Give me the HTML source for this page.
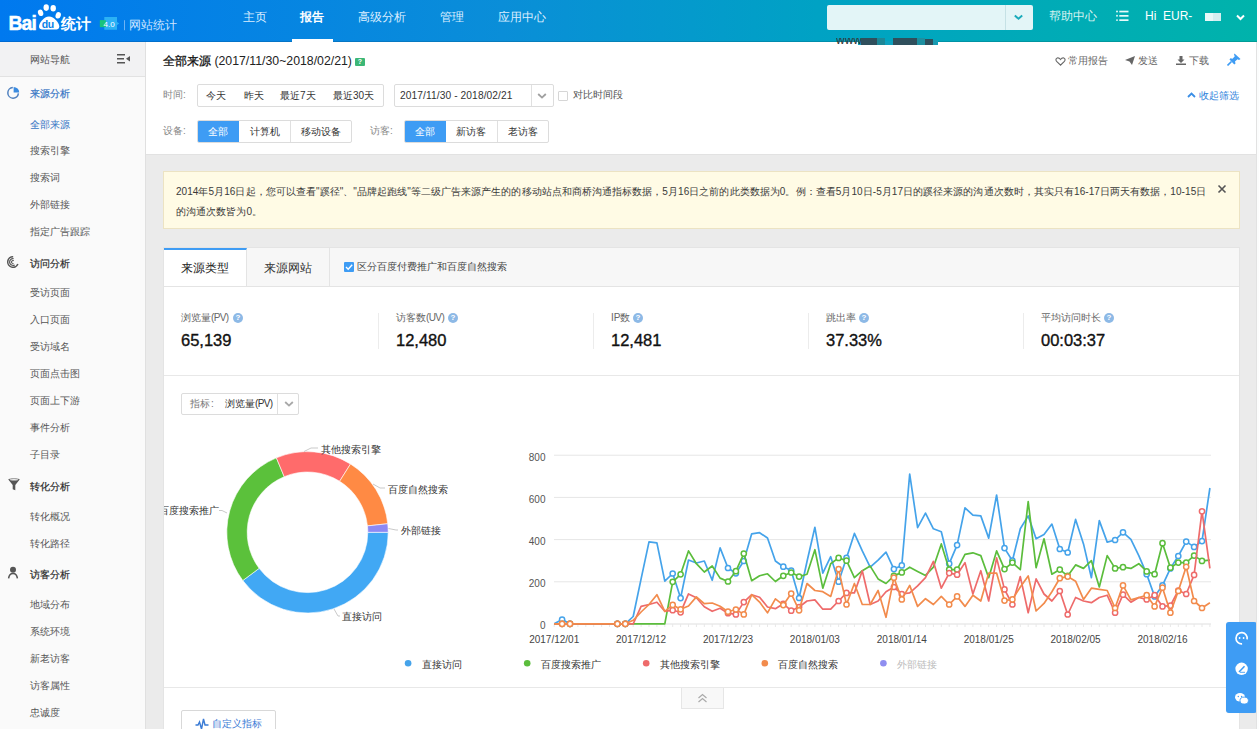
<!DOCTYPE html>
<html><head><meta charset="utf-8">
<style>
*{box-sizing:border-box}
html,body{margin:0;padding:0;width:1259px;height:729px;overflow:hidden;background:#ebebeb;font-family:"Liberation Sans",sans-serif;font-size:10.5px;color:#333}
.a{position:absolute}
.t{position:absolute;white-space:nowrap;line-height:16px;height:16px}
#hdr{position:absolute;left:0;top:0;width:1257px;height:42px;background:linear-gradient(90deg,#0079ef 0%,#0a8ed8 40%,#00a2c4 65%,#00b3ab 100%);box-shadow:inset 0 -1px 0 rgba(0,0,0,0.12)}
.nav{position:absolute;top:9px;line-height:16px;font-size:12.3px;color:#dceeff;white-space:nowrap}
#side{position:absolute;left:0;top:42px;width:146px;height:687px;background:#fafafa;border-right:1px solid #e0e0e0}
#sidehd{position:absolute;left:0;top:0;width:145px;height:35px;background:#f2f2f3;border-bottom:1px solid #e2e2e2}
.si{position:absolute;left:30px;line-height:16px;height:16px;font-size:10px;color:#555;white-space:nowrap}
.sh{position:absolute;left:30px;line-height:16px;height:16px;font-size:10px;color:#2a2a2a;-webkit-text-stroke-width:0.2px;white-space:nowrap}
#filt{position:absolute;left:146px;top:42px;width:1113px;height:113px;background:#fff;border-bottom:1px solid #e2e2e2}
.grp{position:absolute;height:23px;border:1px solid #dcdcdc;border-radius:2px;background:#fff;overflow:hidden}
.btn{position:absolute;top:0;height:21px;line-height:21px;font-size:10.5px;color:#333;text-align:center;white-space:nowrap}
.on{background:#3e9cf4;color:#fff}
.sep{position:absolute;top:0;width:1px;height:21px;background:#e0e0e0}
#notice{position:absolute;left:163px;top:171px;width:1077px;height:58px;background:#fffbe5;border:1px solid #ece3c3}
#panel{position:absolute;left:163px;top:247px;width:1077px;height:500px;background:#fff;border:1px solid #e4e4e4;overflow:hidden}
.lab{position:absolute;white-space:nowrap;line-height:14px;font-size:10px;color:#666}
.val{position:absolute;white-space:nowrap;line-height:20px;font-size:16.5px;color:#111;-webkit-text-stroke:0.35px #111}
.q{position:absolute;width:10px;height:10px;border-radius:5px;background:#8db9e6;color:#fff;font-size:8px;line-height:10px;text-align:center;font-weight:bold}
.vs{position:absolute;width:1px;height:36px;background:#ececec}
.ax{position:absolute;white-space:nowrap;line-height:12px;font-size:10px;color:#555}
.lg{position:absolute;white-space:nowrap;line-height:14px;font-size:10px;color:#333}
.dot{position:absolute;width:7px;height:7px;border-radius:4px}
.pl{position:absolute;white-space:nowrap;line-height:14px;font-size:10px;color:#333}
</style></head><body>
<div id="hdr">
  <!-- logo -->
  <svg class="a" style="left:0;top:0" width="200" height="42" viewBox="0 0 200 42">
    <text x="8.6" y="29.8" font-family="Liberation Sans" font-weight="bold" font-size="19.3" fill="#fff" stroke="#fff" stroke-width="0.5" letter-spacing="-0.9">Bai</text>
    <ellipse cx="40.6" cy="12.8" rx="2.6" ry="3.3" fill="#fff" transform="rotate(-20 40.6 12.8)"/>
    <ellipse cx="46.2" cy="7.6" rx="2.7" ry="3.3" fill="#fff"/>
    <ellipse cx="53.2" cy="8.3" rx="2.7" ry="3.3" fill="#fff"/>
    <ellipse cx="58.2" cy="15.3" rx="2.6" ry="3.3" fill="#fff" transform="rotate(20 58.2 15.3)"/>
    <path d="M49 16.5 C44 16.5 39 23 39 26.5 C39 29.2 41.5 29.6 43.5 29.6 L55 29.6 C57.5 29.6 59.3 29 59.3 26.5 C59.3 23 54 16.5 49 16.5 Z" fill="#fff"/>
    <text x="41.8" y="27.6" font-family="Liberation Sans" font-weight="bold" font-size="10.5" fill="#0a7fe8" letter-spacing="-0.4">du</text>
    <text x="61.3" y="29" font-family="Liberation Sans" font-weight="bold" font-size="15" fill="#fff">统计</text>
    <rect x="99.9" y="20.3" width="6" height="6.8" fill="#19c37d"/>
    <path d="M104.3 17 H117 V22 L119.3 23.5 L117 25 V29.8 H104.3 Z" fill="#2bb2f5"/>
    <rect x="99.9" y="20.3" width="6" height="6.8" fill="#19c37d"/>
    <text x="103.5" y="27.2" font-family="Liberation Sans" font-size="8" fill="#fff">4.0</text>
    <rect x="124" y="20.2" width="1" height="10" fill="#6fb4f4"/>
  </svg>
  <div class="a" style="left:129px;top:17px;line-height:16px;font-size:12px;color:#cfe6ff;white-space:nowrap">网站统计</div>
  <div class="nav" style="left:243px">主页</div>
  <div class="nav" style="left:300px;color:#fff;font-weight:bold">报告</div>
  <div class="a" style="left:292px;top:39px;width:41px;height:3px;background:#fff"></div>
  <div class="nav" style="left:358px">高级分析</div>
  <div class="nav" style="left:440px">管理</div>
  <div class="nav" style="left:498px">应用中心</div>
  <div class="a" style="left:827px;top:5px;width:206px;height:25px;background:#e3f5f7;border-radius:2px"></div>
  <div class="a" style="left:1005px;top:5px;width:1px;height:25px;background:#c5e1e5"></div>
  <svg class="a" style="left:1013px;top:14px" width="11" height="7" viewBox="0 0 11 7"><path d="M1.8 1.5 L5.5 4.8 L9.2 1.5" stroke="#1aabbb" stroke-width="1.9" fill="none"/></svg>
  <div class="nav" style="left:1049px;top:8px;font-size:12px;color:#d6f3f1">帮助中心</div>
  <svg class="a" style="left:1115.5px;top:10px" width="14" height="12" viewBox="0 0 14 12"><g fill="#e8fbfa"><circle cx="1" cy="1.5" r="0.95"/><circle cx="1" cy="5.8" r="0.95"/><circle cx="1" cy="10.1" r="0.95"/><rect x="3.3" y="0.7" width="9.2" height="1.7"/><rect x="3.3" y="5" width="9.2" height="1.7"/><rect x="3.3" y="9.3" width="9.2" height="1.7"/></g></svg>
  <div class="nav" style="left:1145px;top:8px;font-size:12px;color:#fff">Hi&nbsp; EUR-</div>
  <div class="a" style="left:1205px;top:13px;width:16px;height:8px;background:#d5eef0"></div>
  <div class="a" style="left:1205px;top:13px;width:8px;height:8px;background:#e8f8f8"></div>
  <svg class="a" style="left:1236px;top:14px" width="9" height="7" viewBox="0 0 9 7"><path d="M1 1.5 L4.5 5 L8 1.5" stroke="#fff" stroke-width="2" fill="none"/></svg>
</div>
<div class="a" style="left:0;top:42px;width:1259px;height:1px;background:#e8fbff"></div>
<!-- pixelated www -->
<div class="a" style="left:836px;top:38px;width:102px;height:7px;overflow:hidden;z-index:5">
  <div class="a" style="left:22px;top:3px;width:80px;height:4px;background:#0ea1bf"></div>
  <div class="a" style="left:0;top:-4px;font-size:12px;line-height:12px;color:#333">www</div>
  <div class="a" style="left:25px;top:0;width:16px;height:6.6px;background:#2f4f5c"></div>
  <div class="a" style="left:41px;top:0;width:8px;height:6.6px;background:#1d8797"></div>
  <div class="a" style="left:57px;top:0;width:24px;height:6.6px;background:#2f4f5c"></div>
  <div class="a" style="left:81px;top:0;width:8px;height:6.6px;background:#1d8fa0"></div>
  <div class="a" style="left:89px;top:1px;width:8px;height:5.6px;background:#2f4f5c"></div>
  <div class="a" style="left:97px;top:2px;width:4px;height:4.6px;background:#1a9ab0"></div>
</div>

<div id="side">
  <div id="sidehd"></div>
  <div class="si" style="top:10px">网站导航</div>
  <svg class="a" style="left:117px;top:12px" width="13" height="10" viewBox="0 0 13 10"><g fill="#555"><rect x="0" y="0" width="8" height="1.5"/><rect x="0" y="4" width="7" height="1.5"/><rect x="0" y="8" width="8" height="1.5"/><path d="M13 2 L9 4.8 L13 7.5 Z"/></g></svg>
  <svg class="a" style="left:6px;top:43.5px" width="14" height="14" viewBox="0 0 14 14"><path d="M6.8 1.6 A5.3 5.3 0 1 0 12.4 7.4" stroke="#4f80bf" stroke-width="1.5" fill="none"/><path d="M7.6 6.5 V0.9 A5.6 5.6 0 0 1 13.2 6.5 Z" fill="#3b8be0"/></svg>
  <div class="sh" style="top:44px;color:#3574c4">来源分析</div>
  <div class="si" style="top:75px;color:#3574c4">全部来源</div>
  <div class="si" style="top:101px">搜索引擎</div>
  <div class="si" style="top:128px">搜索词</div>
  <div class="si" style="top:155px">外部链接</div>
  <div class="si" style="top:182px">指定广告跟踪</div>
  <svg class="a" style="left:6px;top:213px" width="14" height="14" viewBox="0 0 14 14"><path d="M7.18 1.70 A5.3 5.3 0 1 0 11.91 8.99" stroke="#555" stroke-width="1.5" fill="none"/><path d="M7.59 3.65 A3.4 3.4 0 1 0 8.70 9.94" stroke="#555" stroke-width="1.2" fill="none"/><path d="M7.75 5.70 A1.5 1.5 0 1 0 7.51 8.41" stroke="#555" stroke-width="1.1" fill="none"/></svg>
  <div class="sh" style="top:214px">访问分析</div>
  <div class="si" style="top:243px">受访页面</div>
  <div class="si" style="top:270px">入口页面</div>
  <div class="si" style="top:297px">受访域名</div>
  <div class="si" style="top:324px">页面点击图</div>
  <div class="si" style="top:351px">页面上下游</div>
  <div class="si" style="top:378px">事件分析</div>
  <div class="si" style="top:405px">子目录</div>
  <svg class="a" style="left:7.5px;top:436px" width="12" height="13" viewBox="0 0 12 13"><path d="M0.3 1.6 C0.3 0.2 11.7 0.2 11.7 1.6 L7.3 7 V12.2 L4.7 11.2 V7 Z" fill="#555"/><ellipse cx="6" cy="1.7" rx="4.4" ry="0.8" fill="#eee"/></svg>
  <div class="sh" style="top:437px">转化分析</div>
  <div class="si" style="top:467px">转化概况</div>
  <div class="si" style="top:494px">转化路径</div>
  <svg class="a" style="left:7.3px;top:524px" width="12" height="13" viewBox="0 0 12 13"><circle cx="6" cy="3.8" r="3" fill="#555"/><path d="M1.6 12.4 C2 8.6 4 7.4 6 7.4 C8 7.4 10 8.6 10.4 12.4" stroke="#555" stroke-width="1.5" fill="none"/></svg>
  <div class="sh" style="top:525px">访客分析</div>
  <div class="si" style="top:555px">地域分布</div>
  <div class="si" style="top:582px">系统环境</div>
  <div class="si" style="top:609px">新老访客</div>
  <div class="si" style="top:636px">访客属性</div>
  <div class="si" style="top:663px">忠诚度</div>
</div>

<div id="filt">
  <div class="t" style="left:17px;top:11px;font-size:12.3px;color:#222"><span style="color:#111;-webkit-text-stroke:0.3px #111">全部来源</span> (2017/11/30~2018/02/21)</div>
  <div class="a" style="left:209px;top:16px;width:10px;height:8px;background:#3cb776;border-radius:1px;color:#fff;font-size:7px;line-height:8px;text-align:center;font-weight:bold">?</div>
  <!-- right tools -->
  <svg class="a" style="left:908.5px;top:15px" width="11" height="9" viewBox="0 0 11 9"><path d="M5.5 8.2 L1.6 4.3 C0.6 3.2 0.8 1.4 2.1 1 C3.3 0.6 4.6 1.3 5.5 2.5 C6.4 1.3 7.7 0.6 8.9 1 C10.2 1.4 10.4 3.2 9.4 4.3 Z" stroke="#666" stroke-width="1.1" fill="none"/></svg>
  <div class="t" style="left:922px;top:11px;font-size:10px;color:#666">常用报告</div>
  <svg class="a" style="left:979px;top:14px" width="10" height="9" viewBox="0 0 10 9"><path d="M0 4 L10 0 L7 9 L4.5 5.5 Z" fill="#666"/></svg>
  <div class="t" style="left:992px;top:11px;font-size:10px;color:#666">发送</div>
  <svg class="a" style="left:1030px;top:14px" width="10" height="9" viewBox="0 0 10 9"><path d="M3.5 0 H6.5 V3.5 H8.5 L5 7 L1.5 3.5 H3.5 Z" fill="#666"/><rect x="0" y="7.5" width="10" height="1.5" fill="#666"/></svg>
  <div class="t" style="left:1043px;top:11px;font-size:10px;color:#666">下载</div>
  <svg class="a" style="left:1081px;top:11px" width="14" height="13" viewBox="0 0 14 13"><path d="M7.5 0.5 L13.5 6 L12 7 L10.5 6.2 L8 8.5 L8.5 10.5 L7.3 11.5 L2.5 6.5 L3.5 5.3 L5.5 5.8 L7.8 3.2 L7 1.8 Z" fill="#3e9cf4"/><path d="M4.5 8.5 L0.5 12.5" stroke="#3e9cf4" stroke-width="1.6"/></svg>
  <svg class="a" style="left:1041px;top:50px" width="9" height="6" viewBox="0 0 9 6"><path d="M1 5 L4.5 1.5 L8 5" stroke="#3a8ee6" stroke-width="1.8" fill="none"/></svg>
  <div class="t" style="left:1053px;top:46px;font-size:10px;color:#2f84dc">收起筛选</div>

  <div class="t" style="left:17px;top:45px;color:#888;font-size:10px">时间:</div>
  <div class="grp" style="left:51px;top:42px;width:187px">
    <div class="t" style="left:8px;top:3px;font-size:10px">今天</div>
    <div class="t" style="left:46px;top:3px;font-size:10px">昨天</div>
    <div class="t" style="left:82px;top:3px;font-size:10px">最近7天</div>
    <div class="t" style="left:135px;top:3px;font-size:10px">最近30天</div>
  </div>
  <div class="grp" style="left:248px;top:42px;width:160px">
    <div class="t" style="left:5px;top:3px;font-size:10.2px;letter-spacing:0.1px">2017/11/30 - 2018/02/21</div>
    <div class="sep" style="left:136px"></div>
  </div>
  <svg class="a" style="left:391px;top:51px" width="10" height="6" viewBox="0 0 10 6"><path d="M1.2 1 L5 4.6 L8.8 1" stroke="#a0a0a0" stroke-width="1.8" fill="none"/></svg>
  <div class="a" style="left:412px;top:49px;width:10px;height:10px;border:1px solid #d6d6d6;border-radius:1px;background:#fff"></div>
  <div class="t" style="left:427px;top:45px;color:#555;font-size:10px">对比时间段</div>

  <div class="t" style="left:17px;top:81px;color:#888;font-size:10px">设备:</div>
  <div class="grp" style="left:51px;top:78px;width:155px">
    <div class="a on" style="left:-1px;top:-1px;width:42px;height:23px"></div>
    <div class="t" style="left:10px;top:3px;font-size:10px;color:#fff">全部</div>
    <div class="t" style="left:52px;top:3px;font-size:10px">计算机</div>
    <div class="sep" style="left:92px"></div>
    <div class="t" style="left:103px;top:3px;font-size:10px">移动设备</div>
  </div>
  <div class="t" style="left:224px;top:81px;color:#888;font-size:10px">访客:</div>
  <div class="grp" style="left:258px;top:78px;width:145px">
    <div class="a on" style="left:-1px;top:-1px;width:42px;height:23px"></div>
    <div class="t" style="left:10px;top:3px;font-size:10px;color:#fff">全部</div>
    <div class="t" style="left:51px;top:3px;font-size:10px">新访客</div>
    <div class="sep" style="left:92px"></div>
    <div class="t" style="left:103px;top:3px;font-size:10px">老访客</div>
  </div>
</div>

<div id="notice">
  <div class="a" style="left:12px;top:10px;width:1033px;line-height:20px;font-size:10px;color:#3a3a3a;letter-spacing:0.06px">2014年5月16日起，您可以查看"蹊径"、"品牌起跑线"等二级广告来源产生的的移动站点和商桥沟通指标数据，5月16日之前的此类数据为0。例：查看5月10日-5月17日的蹊径来源的沟通次数时，其实只有16-17日两天有数据，10-15日的沟通次数皆为0。</div>
  <svg class="a" style="left:1053px;top:12px" width="10" height="10" viewBox="0 0 10 10"><path d="M1.5 1.5 L8.5 8.5 M8.5 1.5 L1.5 8.5" stroke="#555" stroke-width="1.6"/></svg>
</div>

<div id="panel">
  <div class="a" style="left:0;top:0;width:1077px;height:39px;background:#f7f7f7;border-bottom:1px solid #e4e4e4"></div>
  <div class="a" style="left:0;top:0;width:83px;height:38px;background:#fff;border-top:2px solid #3e9cf4;border-right:1px solid #e4e4e4"></div>
  <div class="t" style="left:17px;top:12px;font-size:12px;color:#222">来源类型</div>
  <div class="a" style="left:165px;top:0;width:1px;height:39px;background:#e4e4e4"></div>
  <div class="t" style="left:100px;top:12px;font-size:12px;color:#333">来源网站</div>
  <div class="a" style="left:180px;top:14px;width:10px;height:10px;background:#3e9cf4;border-radius:1px"></div>
  <svg class="a" style="left:180px;top:14px" width="10" height="10" viewBox="0 0 10 10"><path d="M2 5 L4.2 7.2 L8.2 2.8" stroke="#fff" stroke-width="1.4" fill="none"/></svg>
  <div class="t" style="left:193px;top:11px;font-size:10px;color:#444">区分百度付费推广和百度自然搜索</div>

  <!-- metrics -->
  <div class="lab" style="left:17px;top:63px">浏览量<span style="letter-spacing:-0.6px">(PV)</span></div><div class="q" style="left:69px;top:65px">?</div>
  <div class="val" style="left:17px;top:82px">65,139</div>
  <div class="vs" style="left:214px;top:65px"></div>
  <div class="lab" style="left:232px;top:63px">访客数<span style="letter-spacing:-0.6px">(UV)</span></div><div class="q" style="left:284px;top:65px">?</div>
  <div class="val" style="left:232px;top:82px">12,480</div>
  <div class="vs" style="left:429px;top:65px"></div>
  <div class="lab" style="left:447px;top:63px">IP数</div><div class="q" style="left:469px;top:65px">?</div>
  <div class="val" style="left:447px;top:82px">12,481</div>
  <div class="vs" style="left:644px;top:65px"></div>
  <div class="lab" style="left:662px;top:63px">跳出率</div><div class="q" style="left:695px;top:65px">?</div>
  <div class="val" style="left:662px;top:82px">37.33%</div>
  <div class="vs" style="left:859px;top:65px"></div>
  <div class="lab" style="left:877px;top:63px">平均访问时长</div><div class="q" style="left:940px;top:65px">?</div>
  <div class="val" style="left:877px;top:82px">00:03:37</div>
  <div class="a" style="left:0;top:127px;width:1077px;height:1px;background:#e8e8e8"></div>

  <svg class="a" style="left:-1px;top:-1px" width="1077" height="500" viewBox="163 247 1077 500">
<!--CHART-->
<rect x="554" y="623.5" width="657" height="1" fill="#e0e0e0"/>
<rect x="554" y="581.3" width="657" height="1" fill="#e6e6e6"/>
<rect x="554" y="539.1" width="657" height="1" fill="#e6e6e6"/>
<rect x="554" y="496.9" width="657" height="1" fill="#e6e6e6"/>
<rect x="554" y="454.7" width="657" height="1" fill="#e6e6e6"/>
<rect x="553.7" y="624" width="1" height="3" fill="#e8e8e8"/>
<rect x="561.6" y="624" width="1" height="3" fill="#e8e8e8"/>
<rect x="569.5" y="624" width="1" height="3" fill="#e8e8e8"/>
<rect x="577.4" y="624" width="1" height="3" fill="#e8e8e8"/>
<rect x="585.3" y="624" width="1" height="3" fill="#e8e8e8"/>
<rect x="593.2" y="624" width="1" height="3" fill="#e8e8e8"/>
<rect x="601.1" y="624" width="1" height="3" fill="#e8e8e8"/>
<rect x="609.0" y="624" width="1" height="3" fill="#e8e8e8"/>
<rect x="616.9" y="624" width="1" height="3" fill="#e8e8e8"/>
<rect x="624.8" y="624" width="1" height="3" fill="#e8e8e8"/>
<rect x="632.7" y="624" width="1" height="3" fill="#e8e8e8"/>
<rect x="640.6" y="624" width="1" height="3" fill="#e8e8e8"/>
<rect x="648.5" y="624" width="1" height="3" fill="#e8e8e8"/>
<rect x="656.4" y="624" width="1" height="3" fill="#e8e8e8"/>
<rect x="664.3" y="624" width="1" height="3" fill="#e8e8e8"/>
<rect x="672.2" y="624" width="1" height="3" fill="#e8e8e8"/>
<rect x="680.1" y="624" width="1" height="3" fill="#e8e8e8"/>
<rect x="688.0" y="624" width="1" height="3" fill="#e8e8e8"/>
<rect x="695.9" y="624" width="1" height="3" fill="#e8e8e8"/>
<rect x="703.8" y="624" width="1" height="3" fill="#e8e8e8"/>
<rect x="711.7" y="624" width="1" height="3" fill="#e8e8e8"/>
<rect x="719.6" y="624" width="1" height="3" fill="#e8e8e8"/>
<rect x="727.5" y="624" width="1" height="3" fill="#e8e8e8"/>
<rect x="735.4" y="624" width="1" height="3" fill="#e8e8e8"/>
<rect x="743.3" y="624" width="1" height="3" fill="#e8e8e8"/>
<rect x="751.2" y="624" width="1" height="3" fill="#e8e8e8"/>
<rect x="759.1" y="624" width="1" height="3" fill="#e8e8e8"/>
<rect x="767.0" y="624" width="1" height="3" fill="#e8e8e8"/>
<rect x="774.9" y="624" width="1" height="3" fill="#e8e8e8"/>
<rect x="782.8" y="624" width="1" height="3" fill="#e8e8e8"/>
<rect x="790.7" y="624" width="1" height="3" fill="#e8e8e8"/>
<rect x="798.6" y="624" width="1" height="3" fill="#e8e8e8"/>
<rect x="806.5" y="624" width="1" height="3" fill="#e8e8e8"/>
<rect x="814.4" y="624" width="1" height="3" fill="#e8e8e8"/>
<rect x="822.3" y="624" width="1" height="3" fill="#e8e8e8"/>
<rect x="830.2" y="624" width="1" height="3" fill="#e8e8e8"/>
<rect x="838.1" y="624" width="1" height="3" fill="#e8e8e8"/>
<rect x="846.0" y="624" width="1" height="3" fill="#e8e8e8"/>
<rect x="853.9" y="624" width="1" height="3" fill="#e8e8e8"/>
<rect x="861.8" y="624" width="1" height="3" fill="#e8e8e8"/>
<rect x="869.7" y="624" width="1" height="3" fill="#e8e8e8"/>
<rect x="877.6" y="624" width="1" height="3" fill="#e8e8e8"/>
<rect x="885.5" y="624" width="1" height="3" fill="#e8e8e8"/>
<rect x="893.4" y="624" width="1" height="3" fill="#e8e8e8"/>
<rect x="901.3" y="624" width="1" height="3" fill="#e8e8e8"/>
<rect x="909.2" y="624" width="1" height="3" fill="#e8e8e8"/>
<rect x="917.1" y="624" width="1" height="3" fill="#e8e8e8"/>
<rect x="925.0" y="624" width="1" height="3" fill="#e8e8e8"/>
<rect x="932.9" y="624" width="1" height="3" fill="#e8e8e8"/>
<rect x="940.8" y="624" width="1" height="3" fill="#e8e8e8"/>
<rect x="948.7" y="624" width="1" height="3" fill="#e8e8e8"/>
<rect x="956.6" y="624" width="1" height="3" fill="#e8e8e8"/>
<rect x="964.5" y="624" width="1" height="3" fill="#e8e8e8"/>
<rect x="972.4" y="624" width="1" height="3" fill="#e8e8e8"/>
<rect x="980.3" y="624" width="1" height="3" fill="#e8e8e8"/>
<rect x="988.2" y="624" width="1" height="3" fill="#e8e8e8"/>
<rect x="996.1" y="624" width="1" height="3" fill="#e8e8e8"/>
<rect x="1004.0" y="624" width="1" height="3" fill="#e8e8e8"/>
<rect x="1011.9" y="624" width="1" height="3" fill="#e8e8e8"/>
<rect x="1019.8" y="624" width="1" height="3" fill="#e8e8e8"/>
<rect x="1027.7" y="624" width="1" height="3" fill="#e8e8e8"/>
<rect x="1035.6" y="624" width="1" height="3" fill="#e8e8e8"/>
<rect x="1043.5" y="624" width="1" height="3" fill="#e8e8e8"/>
<rect x="1051.4" y="624" width="1" height="3" fill="#e8e8e8"/>
<rect x="1059.3" y="624" width="1" height="3" fill="#e8e8e8"/>
<rect x="1067.2" y="624" width="1" height="3" fill="#e8e8e8"/>
<rect x="1075.1" y="624" width="1" height="3" fill="#e8e8e8"/>
<rect x="1083.0" y="624" width="1" height="3" fill="#e8e8e8"/>
<rect x="1090.9" y="624" width="1" height="3" fill="#e8e8e8"/>
<rect x="1098.8" y="624" width="1" height="3" fill="#e8e8e8"/>
<rect x="1106.7" y="624" width="1" height="3" fill="#e8e8e8"/>
<rect x="1114.6" y="624" width="1" height="3" fill="#e8e8e8"/>
<rect x="1122.5" y="624" width="1" height="3" fill="#e8e8e8"/>
<rect x="1130.4" y="624" width="1" height="3" fill="#e8e8e8"/>
<rect x="1138.3" y="624" width="1" height="3" fill="#e8e8e8"/>
<rect x="1146.2" y="624" width="1" height="3" fill="#e8e8e8"/>
<rect x="1154.1" y="624" width="1" height="3" fill="#e8e8e8"/>
<rect x="1162.0" y="624" width="1" height="3" fill="#e8e8e8"/>
<rect x="1169.9" y="624" width="1" height="3" fill="#e8e8e8"/>
<rect x="1177.8" y="624" width="1" height="3" fill="#e8e8e8"/>
<rect x="1185.7" y="624" width="1" height="3" fill="#e8e8e8"/>
<rect x="1193.6" y="624" width="1" height="3" fill="#e8e8e8"/>
<rect x="1201.5" y="624" width="1" height="3" fill="#e8e8e8"/>
<rect x="1209.4" y="624" width="1" height="3" fill="#e8e8e8"/>
<polyline points="554.2,623.8 562.1,619.5 570.0,623.8 577.9,623.8 585.8,623.8 593.7,623.8 601.6,623.8 609.5,623.8 617.4,623.8 625.3,623.8 633.2,616.5 641.1,578.8 649.0,541.9 656.9,542.9 664.8,581.1 672.7,573.5 680.6,598.1 688.5,560.0 696.4,563.0 704.3,561.0 712.2,580.3 720.1,547.9 728.0,568.0 735.9,573.3 743.8,561.0 751.7,533.8 759.6,532.7 767.5,538.0 775.4,561.0 783.3,566.7 791.2,570.5 799.1,598.0 807.0,561.5 814.9,527.3 822.8,573.1 830.7,556.7 838.6,581.7 846.5,557.9 854.4,533.4 862.3,550.9 870.2,567.2 878.1,560.2 886.0,552.1 893.9,569.1 901.8,565.4 909.7,474.0 917.6,527.6 925.5,513.1 933.4,528.8 941.3,531.8 949.2,563.7 957.1,545.1 965.0,507.8 972.9,515.2 980.8,515.9 988.7,538.1 996.6,495.0 1004.5,548.1 1012.4,560.7 1020.3,528.8 1028.2,515.9 1036.1,538.8 1044.0,534.6 1051.9,524.1 1059.8,549.0 1067.7,552.5 1075.6,519.4 1083.5,543.9 1091.4,577.7 1099.3,520.6 1107.2,542.1 1115.1,540.0 1123.0,532.3 1130.9,539.3 1138.8,555.6 1146.7,574.2 1154.6,596.4 1162.5,585.4 1170.4,568.4 1178.3,556.0 1186.2,541.6 1194.1,546.9 1202.0,541.1 1209.9,488.0" fill="none" stroke="#45a3ea" stroke-width="1.7" stroke-linejoin="round"/>
<circle cx="562.1" cy="619.5" r="2.6" fill="#fff" stroke="#45a3ea" stroke-width="1.5"/>
<circle cx="570.0" cy="623.8" r="2.6" fill="#fff" stroke="#45a3ea" stroke-width="1.5"/>
<circle cx="617.4" cy="623.8" r="2.6" fill="#fff" stroke="#45a3ea" stroke-width="1.5"/>
<circle cx="625.3" cy="623.8" r="2.6" fill="#fff" stroke="#45a3ea" stroke-width="1.5"/>
<circle cx="672.7" cy="573.5" r="2.6" fill="#fff" stroke="#45a3ea" stroke-width="1.5"/>
<circle cx="680.6" cy="598.1" r="2.6" fill="#fff" stroke="#45a3ea" stroke-width="1.5"/>
<circle cx="728.0" cy="568.0" r="2.6" fill="#fff" stroke="#45a3ea" stroke-width="1.5"/>
<circle cx="735.9" cy="573.3" r="2.6" fill="#fff" stroke="#45a3ea" stroke-width="1.5"/>
<circle cx="743.8" cy="561.0" r="2.6" fill="#fff" stroke="#45a3ea" stroke-width="1.5"/>
<circle cx="783.3" cy="566.7" r="2.6" fill="#fff" stroke="#45a3ea" stroke-width="1.5"/>
<circle cx="791.2" cy="570.5" r="2.6" fill="#fff" stroke="#45a3ea" stroke-width="1.5"/>
<circle cx="799.1" cy="598.0" r="2.6" fill="#fff" stroke="#45a3ea" stroke-width="1.5"/>
<circle cx="838.6" cy="581.7" r="2.6" fill="#fff" stroke="#45a3ea" stroke-width="1.5"/>
<circle cx="846.5" cy="557.9" r="2.6" fill="#fff" stroke="#45a3ea" stroke-width="1.5"/>
<circle cx="893.9" cy="569.1" r="2.6" fill="#fff" stroke="#45a3ea" stroke-width="1.5"/>
<circle cx="901.8" cy="565.4" r="2.6" fill="#fff" stroke="#45a3ea" stroke-width="1.5"/>
<circle cx="949.2" cy="563.7" r="2.6" fill="#fff" stroke="#45a3ea" stroke-width="1.5"/>
<circle cx="957.1" cy="545.1" r="2.6" fill="#fff" stroke="#45a3ea" stroke-width="1.5"/>
<circle cx="1004.5" cy="548.1" r="2.6" fill="#fff" stroke="#45a3ea" stroke-width="1.5"/>
<circle cx="1012.4" cy="560.7" r="2.6" fill="#fff" stroke="#45a3ea" stroke-width="1.5"/>
<circle cx="1059.8" cy="549.0" r="2.6" fill="#fff" stroke="#45a3ea" stroke-width="1.5"/>
<circle cx="1067.7" cy="552.5" r="2.6" fill="#fff" stroke="#45a3ea" stroke-width="1.5"/>
<circle cx="1115.1" cy="540.0" r="2.6" fill="#fff" stroke="#45a3ea" stroke-width="1.5"/>
<circle cx="1123.0" cy="532.3" r="2.6" fill="#fff" stroke="#45a3ea" stroke-width="1.5"/>
<circle cx="1146.7" cy="574.2" r="2.6" fill="#fff" stroke="#45a3ea" stroke-width="1.5"/>
<circle cx="1154.6" cy="596.4" r="2.6" fill="#fff" stroke="#45a3ea" stroke-width="1.5"/>
<circle cx="1162.5" cy="585.4" r="2.6" fill="#fff" stroke="#45a3ea" stroke-width="1.5"/>
<circle cx="1170.4" cy="568.4" r="2.6" fill="#fff" stroke="#45a3ea" stroke-width="1.5"/>
<circle cx="1178.3" cy="556.0" r="2.6" fill="#fff" stroke="#45a3ea" stroke-width="1.5"/>
<circle cx="1186.2" cy="541.6" r="2.6" fill="#fff" stroke="#45a3ea" stroke-width="1.5"/>
<circle cx="1194.1" cy="546.9" r="2.6" fill="#fff" stroke="#45a3ea" stroke-width="1.5"/>
<circle cx="1202.0" cy="541.1" r="2.6" fill="#fff" stroke="#45a3ea" stroke-width="1.5"/>
<polyline points="554.2,623.8 562.1,623.8 570.0,623.8 577.9,623.8 585.8,623.8 593.7,623.8 601.6,623.8 609.5,623.8 617.4,623.8 625.3,623.8 633.2,623.8 641.1,623.8 649.0,623.8 656.9,623.8 664.8,623.8 672.7,581.8 680.6,574.3 688.5,550.9 696.4,563.7 704.3,572.0 712.2,566.0 720.1,578.1 728.0,581.5 735.9,571.2 743.8,553.6 751.7,580.7 759.6,575.8 767.5,573.8 775.4,581.5 783.3,575.8 791.2,572.5 799.1,576.6 807.0,574.2 814.9,549.7 822.8,588.2 830.7,563.7 838.6,557.9 846.5,560.7 854.4,577.7 862.3,570.7 870.2,566.1 878.1,578.9 886.0,583.5 893.9,575.9 901.8,572.4 909.7,567.2 917.6,571.4 925.5,575.4 933.4,567.2 941.3,543.9 949.2,569.6 957.1,569.6 965.0,554.4 972.9,552.8 980.8,555.6 988.7,577.7 996.6,550.9 1004.5,569.1 1012.4,562.6 1020.3,569.6 1028.2,501.5 1036.1,567.7 1044.0,538.8 1051.9,574.2 1059.8,569.6 1067.7,575.9 1075.6,564.9 1083.5,568.4 1091.4,560.7 1099.3,587.0 1107.2,555.6 1115.1,568.4 1123.0,567.2 1130.9,568.4 1138.8,563.7 1146.7,571.4 1154.6,574.2 1162.5,543.2 1170.4,567.7 1178.3,562.6 1186.2,562.6 1194.1,555.6 1202.0,560.9 1209.9,560.2" fill="none" stroke="#5bbd3c" stroke-width="1.7" stroke-linejoin="round"/>
<circle cx="562.1" cy="623.8" r="2.6" fill="#fff" stroke="#5bbd3c" stroke-width="1.5"/>
<circle cx="570.0" cy="623.8" r="2.6" fill="#fff" stroke="#5bbd3c" stroke-width="1.5"/>
<circle cx="617.4" cy="623.8" r="2.6" fill="#fff" stroke="#5bbd3c" stroke-width="1.5"/>
<circle cx="625.3" cy="623.8" r="2.6" fill="#fff" stroke="#5bbd3c" stroke-width="1.5"/>
<circle cx="672.7" cy="581.8" r="2.6" fill="#fff" stroke="#5bbd3c" stroke-width="1.5"/>
<circle cx="680.6" cy="574.3" r="2.6" fill="#fff" stroke="#5bbd3c" stroke-width="1.5"/>
<circle cx="728.0" cy="581.5" r="2.6" fill="#fff" stroke="#5bbd3c" stroke-width="1.5"/>
<circle cx="735.9" cy="571.2" r="2.6" fill="#fff" stroke="#5bbd3c" stroke-width="1.5"/>
<circle cx="743.8" cy="553.6" r="2.6" fill="#fff" stroke="#5bbd3c" stroke-width="1.5"/>
<circle cx="783.3" cy="575.8" r="2.6" fill="#fff" stroke="#5bbd3c" stroke-width="1.5"/>
<circle cx="791.2" cy="572.5" r="2.6" fill="#fff" stroke="#5bbd3c" stroke-width="1.5"/>
<circle cx="799.1" cy="576.6" r="2.6" fill="#fff" stroke="#5bbd3c" stroke-width="1.5"/>
<circle cx="838.6" cy="557.9" r="2.6" fill="#fff" stroke="#5bbd3c" stroke-width="1.5"/>
<circle cx="846.5" cy="560.7" r="2.6" fill="#fff" stroke="#5bbd3c" stroke-width="1.5"/>
<circle cx="893.9" cy="575.9" r="2.6" fill="#fff" stroke="#5bbd3c" stroke-width="1.5"/>
<circle cx="901.8" cy="572.4" r="2.6" fill="#fff" stroke="#5bbd3c" stroke-width="1.5"/>
<circle cx="949.2" cy="569.6" r="2.6" fill="#fff" stroke="#5bbd3c" stroke-width="1.5"/>
<circle cx="957.1" cy="569.6" r="2.6" fill="#fff" stroke="#5bbd3c" stroke-width="1.5"/>
<circle cx="1004.5" cy="569.1" r="2.6" fill="#fff" stroke="#5bbd3c" stroke-width="1.5"/>
<circle cx="1012.4" cy="562.6" r="2.6" fill="#fff" stroke="#5bbd3c" stroke-width="1.5"/>
<circle cx="1059.8" cy="569.6" r="2.6" fill="#fff" stroke="#5bbd3c" stroke-width="1.5"/>
<circle cx="1067.7" cy="575.9" r="2.6" fill="#fff" stroke="#5bbd3c" stroke-width="1.5"/>
<circle cx="1115.1" cy="568.4" r="2.6" fill="#fff" stroke="#5bbd3c" stroke-width="1.5"/>
<circle cx="1123.0" cy="567.2" r="2.6" fill="#fff" stroke="#5bbd3c" stroke-width="1.5"/>
<circle cx="1146.7" cy="571.4" r="2.6" fill="#fff" stroke="#5bbd3c" stroke-width="1.5"/>
<circle cx="1154.6" cy="574.2" r="2.6" fill="#fff" stroke="#5bbd3c" stroke-width="1.5"/>
<circle cx="1162.5" cy="543.2" r="2.6" fill="#fff" stroke="#5bbd3c" stroke-width="1.5"/>
<circle cx="1170.4" cy="567.7" r="2.6" fill="#fff" stroke="#5bbd3c" stroke-width="1.5"/>
<circle cx="1178.3" cy="562.6" r="2.6" fill="#fff" stroke="#5bbd3c" stroke-width="1.5"/>
<circle cx="1186.2" cy="562.6" r="2.6" fill="#fff" stroke="#5bbd3c" stroke-width="1.5"/>
<circle cx="1194.1" cy="555.6" r="2.6" fill="#fff" stroke="#5bbd3c" stroke-width="1.5"/>
<circle cx="1202.0" cy="560.9" r="2.6" fill="#fff" stroke="#5bbd3c" stroke-width="1.5"/>
<polyline points="554.2,623.8 562.1,623.8 570.0,623.8 577.9,623.8 585.8,623.8 593.7,623.8 601.6,623.8 609.5,623.8 617.4,623.8 625.3,623.8 633.2,623.8 641.1,606.3 649.0,604.5 656.9,602.2 664.8,611.3 672.7,610.2 680.6,612.3 688.5,593.9 696.4,597.7 704.3,606.7 712.2,611.3 720.1,608.2 728.0,613.2 735.9,614.4 743.8,602.1 751.7,594.7 759.6,597.2 767.5,607.0 775.4,608.7 783.3,603.8 791.2,610.7 799.1,607.0 807.0,601.0 814.9,599.9 822.8,609.2 830.7,609.2 838.6,601.0 846.5,592.9 854.4,592.9 862.3,570.7 870.2,604.5 878.1,601.0 886.0,591.7 893.9,587.0 901.8,594.0 909.7,592.9 917.6,585.9 925.5,577.7 933.4,561.4 941.3,588.2 949.2,573.1 957.1,574.7 965.0,562.6 972.9,594.0 980.8,570.7 988.7,601.0 996.6,557.9 1004.5,589.4 1012.4,604.5 1020.3,576.6 1028.2,612.7 1036.1,578.9 1044.0,594.0 1051.9,601.0 1059.8,591.0 1067.7,614.5 1075.6,597.5 1083.5,601.0 1091.4,602.7 1099.3,597.5 1107.2,595.2 1115.1,612.7 1123.0,594.7 1130.9,602.2 1138.8,597.5 1146.7,599.4 1154.6,595.2 1162.5,606.4 1170.4,605.7 1178.3,590.5 1186.2,594.0 1194.1,574.9 1202.0,511.3 1209.9,568.4" fill="none" stroke="#ee6b6b" stroke-width="1.7" stroke-linejoin="round"/>
<circle cx="562.1" cy="623.8" r="2.6" fill="#fff" stroke="#ee6b6b" stroke-width="1.5"/>
<circle cx="570.0" cy="623.8" r="2.6" fill="#fff" stroke="#ee6b6b" stroke-width="1.5"/>
<circle cx="617.4" cy="623.8" r="2.6" fill="#fff" stroke="#ee6b6b" stroke-width="1.5"/>
<circle cx="625.3" cy="623.8" r="2.6" fill="#fff" stroke="#ee6b6b" stroke-width="1.5"/>
<circle cx="672.7" cy="610.2" r="2.6" fill="#fff" stroke="#ee6b6b" stroke-width="1.5"/>
<circle cx="680.6" cy="612.3" r="2.6" fill="#fff" stroke="#ee6b6b" stroke-width="1.5"/>
<circle cx="728.0" cy="613.2" r="2.6" fill="#fff" stroke="#ee6b6b" stroke-width="1.5"/>
<circle cx="735.9" cy="614.4" r="2.6" fill="#fff" stroke="#ee6b6b" stroke-width="1.5"/>
<circle cx="743.8" cy="602.1" r="2.6" fill="#fff" stroke="#ee6b6b" stroke-width="1.5"/>
<circle cx="783.3" cy="603.8" r="2.6" fill="#fff" stroke="#ee6b6b" stroke-width="1.5"/>
<circle cx="791.2" cy="610.7" r="2.6" fill="#fff" stroke="#ee6b6b" stroke-width="1.5"/>
<circle cx="799.1" cy="607.0" r="2.6" fill="#fff" stroke="#ee6b6b" stroke-width="1.5"/>
<circle cx="838.6" cy="601.0" r="2.6" fill="#fff" stroke="#ee6b6b" stroke-width="1.5"/>
<circle cx="846.5" cy="592.9" r="2.6" fill="#fff" stroke="#ee6b6b" stroke-width="1.5"/>
<circle cx="893.9" cy="587.0" r="2.6" fill="#fff" stroke="#ee6b6b" stroke-width="1.5"/>
<circle cx="901.8" cy="594.0" r="2.6" fill="#fff" stroke="#ee6b6b" stroke-width="1.5"/>
<circle cx="949.2" cy="573.1" r="2.6" fill="#fff" stroke="#ee6b6b" stroke-width="1.5"/>
<circle cx="957.1" cy="574.7" r="2.6" fill="#fff" stroke="#ee6b6b" stroke-width="1.5"/>
<circle cx="1004.5" cy="589.4" r="2.6" fill="#fff" stroke="#ee6b6b" stroke-width="1.5"/>
<circle cx="1012.4" cy="604.5" r="2.6" fill="#fff" stroke="#ee6b6b" stroke-width="1.5"/>
<circle cx="1059.8" cy="591.0" r="2.6" fill="#fff" stroke="#ee6b6b" stroke-width="1.5"/>
<circle cx="1067.7" cy="614.5" r="2.6" fill="#fff" stroke="#ee6b6b" stroke-width="1.5"/>
<circle cx="1115.1" cy="612.7" r="2.6" fill="#fff" stroke="#ee6b6b" stroke-width="1.5"/>
<circle cx="1123.0" cy="594.7" r="2.6" fill="#fff" stroke="#ee6b6b" stroke-width="1.5"/>
<circle cx="1146.7" cy="599.4" r="2.6" fill="#fff" stroke="#ee6b6b" stroke-width="1.5"/>
<circle cx="1154.6" cy="595.2" r="2.6" fill="#fff" stroke="#ee6b6b" stroke-width="1.5"/>
<circle cx="1162.5" cy="606.4" r="2.6" fill="#fff" stroke="#ee6b6b" stroke-width="1.5"/>
<circle cx="1170.4" cy="605.7" r="2.6" fill="#fff" stroke="#ee6b6b" stroke-width="1.5"/>
<circle cx="1178.3" cy="590.5" r="2.6" fill="#fff" stroke="#ee6b6b" stroke-width="1.5"/>
<circle cx="1186.2" cy="594.0" r="2.6" fill="#fff" stroke="#ee6b6b" stroke-width="1.5"/>
<circle cx="1194.1" cy="574.9" r="2.6" fill="#fff" stroke="#ee6b6b" stroke-width="1.5"/>
<circle cx="1202.0" cy="511.3" r="2.6" fill="#fff" stroke="#ee6b6b" stroke-width="1.5"/>
<polyline points="554.2,623.8 562.1,623.8 570.0,623.8 577.9,623.8 585.8,623.8 593.7,623.8 601.6,623.8 609.5,623.8 617.4,623.8 625.3,623.8 633.2,620.3 641.1,612.0 649.0,604.5 656.9,594.7 664.8,611.3 672.7,604.9 680.6,609.3 688.5,606.0 696.4,596.9 704.3,603.7 712.2,603.0 720.1,606.3 728.0,611.7 735.9,609.5 743.8,614.4 751.7,594.7 759.6,602.1 767.5,612.8 775.4,598.8 783.3,605.1 791.2,593.6 799.1,610.3 807.0,583.5 814.9,590.5 822.8,591.7 830.7,596.4 838.6,569.1 846.5,604.5 854.4,583.5 862.3,604.5 870.2,604.5 878.1,590.5 886.0,617.3 893.9,577.7 901.8,599.4 909.7,585.4 917.6,606.4 925.5,598.7 933.4,604.5 941.3,596.4 949.2,604.5 957.1,596.4 965.0,606.4 972.9,595.2 980.8,601.0 988.7,573.1 996.6,573.1 1004.5,600.6 1012.4,599.4 1020.3,587.0 1028.2,575.9 1036.1,611.0 1044.0,603.4 1051.9,591.7 1059.8,578.2 1067.7,576.6 1075.6,581.2 1083.5,599.4 1091.4,588.2 1099.3,589.4 1107.2,590.5 1115.1,608.0 1123.0,585.4 1130.9,599.9 1138.8,597.5 1146.7,595.2 1154.6,606.4 1162.5,587.7 1170.4,612.7 1178.3,591.0 1186.2,566.8 1194.1,601.0 1202.0,608.0 1209.9,602.7" fill="none" stroke="#f28b4c" stroke-width="1.7" stroke-linejoin="round"/>
<circle cx="562.1" cy="623.8" r="2.6" fill="#fff" stroke="#f28b4c" stroke-width="1.5"/>
<circle cx="570.0" cy="623.8" r="2.6" fill="#fff" stroke="#f28b4c" stroke-width="1.5"/>
<circle cx="617.4" cy="623.8" r="2.6" fill="#fff" stroke="#f28b4c" stroke-width="1.5"/>
<circle cx="625.3" cy="623.8" r="2.6" fill="#fff" stroke="#f28b4c" stroke-width="1.5"/>
<circle cx="672.7" cy="604.9" r="2.6" fill="#fff" stroke="#f28b4c" stroke-width="1.5"/>
<circle cx="680.6" cy="609.3" r="2.6" fill="#fff" stroke="#f28b4c" stroke-width="1.5"/>
<circle cx="728.0" cy="611.7" r="2.6" fill="#fff" stroke="#f28b4c" stroke-width="1.5"/>
<circle cx="735.9" cy="609.5" r="2.6" fill="#fff" stroke="#f28b4c" stroke-width="1.5"/>
<circle cx="743.8" cy="614.4" r="2.6" fill="#fff" stroke="#f28b4c" stroke-width="1.5"/>
<circle cx="783.3" cy="605.1" r="2.6" fill="#fff" stroke="#f28b4c" stroke-width="1.5"/>
<circle cx="791.2" cy="593.6" r="2.6" fill="#fff" stroke="#f28b4c" stroke-width="1.5"/>
<circle cx="799.1" cy="610.3" r="2.6" fill="#fff" stroke="#f28b4c" stroke-width="1.5"/>
<circle cx="838.6" cy="569.1" r="2.6" fill="#fff" stroke="#f28b4c" stroke-width="1.5"/>
<circle cx="846.5" cy="604.5" r="2.6" fill="#fff" stroke="#f28b4c" stroke-width="1.5"/>
<circle cx="893.9" cy="577.7" r="2.6" fill="#fff" stroke="#f28b4c" stroke-width="1.5"/>
<circle cx="901.8" cy="599.4" r="2.6" fill="#fff" stroke="#f28b4c" stroke-width="1.5"/>
<circle cx="949.2" cy="604.5" r="2.6" fill="#fff" stroke="#f28b4c" stroke-width="1.5"/>
<circle cx="957.1" cy="596.4" r="2.6" fill="#fff" stroke="#f28b4c" stroke-width="1.5"/>
<circle cx="1004.5" cy="600.6" r="2.6" fill="#fff" stroke="#f28b4c" stroke-width="1.5"/>
<circle cx="1012.4" cy="599.4" r="2.6" fill="#fff" stroke="#f28b4c" stroke-width="1.5"/>
<circle cx="1059.8" cy="578.2" r="2.6" fill="#fff" stroke="#f28b4c" stroke-width="1.5"/>
<circle cx="1067.7" cy="576.6" r="2.6" fill="#fff" stroke="#f28b4c" stroke-width="1.5"/>
<circle cx="1115.1" cy="608.0" r="2.6" fill="#fff" stroke="#f28b4c" stroke-width="1.5"/>
<circle cx="1123.0" cy="585.4" r="2.6" fill="#fff" stroke="#f28b4c" stroke-width="1.5"/>
<circle cx="1146.7" cy="595.2" r="2.6" fill="#fff" stroke="#f28b4c" stroke-width="1.5"/>
<circle cx="1154.6" cy="606.4" r="2.6" fill="#fff" stroke="#f28b4c" stroke-width="1.5"/>
<circle cx="1162.5" cy="587.7" r="2.6" fill="#fff" stroke="#f28b4c" stroke-width="1.5"/>
<circle cx="1170.4" cy="612.7" r="2.6" fill="#fff" stroke="#f28b4c" stroke-width="1.5"/>
<circle cx="1178.3" cy="591.0" r="2.6" fill="#fff" stroke="#f28b4c" stroke-width="1.5"/>
<circle cx="1186.2" cy="566.8" r="2.6" fill="#fff" stroke="#f28b4c" stroke-width="1.5"/>
<circle cx="1194.1" cy="601.0" r="2.6" fill="#fff" stroke="#f28b4c" stroke-width="1.5"/>
<circle cx="1202.0" cy="608.0" r="2.6" fill="#fff" stroke="#f28b4c" stroke-width="1.5"/>
<path d="M388.20 532.30 A80.7 80.7 0 0 1 242.80 580.53 L259.15 568.34 A60.3 60.3 0 0 0 367.80 532.30 Z" fill="#41a8f4" stroke="#fff" stroke-width="0.6"/>
<path d="M242.80 580.53 A80.7 80.7 0 0 1 276.36 457.85 L284.23 476.67 A60.3 60.3 0 0 0 259.15 568.34 Z" fill="#5bc13b" stroke="#fff" stroke-width="0.6"/>
<path d="M276.36 457.85 A80.7 80.7 0 0 1 350.50 464.01 L339.63 481.27 A60.3 60.3 0 0 0 284.23 476.67 Z" fill="#ff6b6b" stroke="#fff" stroke-width="0.6"/>
<path d="M350.50 464.01 A80.7 80.7 0 0 1 387.74 523.72 L367.46 525.89 A60.3 60.3 0 0 0 339.63 481.27 Z" fill="#ff8a44" stroke="#fff" stroke-width="0.6"/>
<path d="M387.74 523.72 A80.7 80.7 0 0 1 388.20 532.30 L367.80 532.30 A60.3 60.3 0 0 0 367.46 525.89 Z" fill="#8d89f4" stroke="#fff" stroke-width="0.6"/>
<path d="M304 451.5 L311 448 L318 448" stroke="#bbb" stroke-width="0.8" fill="none"/>
<path d="M373 484 L380 488 L385 488" stroke="#bbb" stroke-width="0.8" fill="none"/>
<path d="M388.5 528.5 L396 530 L398 530" stroke="#bbb" stroke-width="0.8" fill="none"/>
<path d="M334 609 L338 616 L340 616" stroke="#bbb" stroke-width="0.8" fill="none"/>
<path d="M227 513 L222 510.5 L219 510.5" stroke="#bbb" stroke-width="0.8" fill="none"/>
<text x="545.5" y="629.4" font-family="Liberation Sans" font-size="10" fill="#555" text-anchor="end">0</text>
<text x="545.5" y="587.2" font-family="Liberation Sans" font-size="10" fill="#555" text-anchor="end">200</text>
<text x="545.5" y="545.0" font-family="Liberation Sans" font-size="10" fill="#555" text-anchor="end">400</text>
<text x="545.5" y="502.8" font-family="Liberation Sans" font-size="10" fill="#555" text-anchor="end">600</text>
<text x="545.5" y="460.6" font-family="Liberation Sans" font-size="10" fill="#555" text-anchor="end">800</text>
<text x="554.2" y="642.8" font-family="Liberation Sans" font-size="10" fill="#444" text-anchor="middle">2017/12/01</text>
<text x="641.1" y="642.8" font-family="Liberation Sans" font-size="10" fill="#444" text-anchor="middle">2017/12/12</text>
<text x="728.0" y="642.8" font-family="Liberation Sans" font-size="10" fill="#444" text-anchor="middle">2017/12/23</text>
<text x="814.9" y="642.8" font-family="Liberation Sans" font-size="10" fill="#444" text-anchor="middle">2018/01/03</text>
<text x="901.8" y="642.8" font-family="Liberation Sans" font-size="10" fill="#444" text-anchor="middle">2018/01/14</text>
<text x="988.7" y="642.8" font-family="Liberation Sans" font-size="10" fill="#444" text-anchor="middle">2018/01/25</text>
<text x="1075.6" y="642.8" font-family="Liberation Sans" font-size="10" fill="#444" text-anchor="middle">2018/02/05</text>
<text x="1162.5" y="642.8" font-family="Liberation Sans" font-size="10" fill="#444" text-anchor="middle">2018/02/16</text>
<text x="321.4" y="453.2" font-family="Liberation Sans" font-size="10" fill="#333">其他搜索引擎</text>
<text x="387.7" y="492.7" font-family="Liberation Sans" font-size="10" fill="#333">百度自然搜索</text>
<text x="400.6" y="533.6" font-family="Liberation Sans" font-size="10" fill="#333">外部链接</text>
<text x="341.6" y="620.3" font-family="Liberation Sans" font-size="10" fill="#333">直接访问</text>
<text x="158.6" y="514.3" font-family="Liberation Sans" font-size="10" fill="#333">百度搜索推广</text>
<circle cx="408.1" cy="663.3" r="3.3" fill="#45a3ea"/>
<text x="421.6" y="668.2" font-family="Liberation Sans" font-size="10" fill="#333">直接访问</text>
<circle cx="527.2" cy="663.3" r="3.3" fill="#5bbd3c"/>
<text x="540.7" y="668.2" font-family="Liberation Sans" font-size="10" fill="#333">百度搜索推广</text>
<circle cx="646.2" cy="663.3" r="3.3" fill="#ee6b6b"/>
<text x="659.7" y="668.2" font-family="Liberation Sans" font-size="10" fill="#333">其他搜索引擎</text>
<circle cx="764.8" cy="663.3" r="3.3" fill="#f28b4c"/>
<text x="778.3" y="668.2" font-family="Liberation Sans" font-size="10" fill="#333">百度自然搜索</text>
<circle cx="883.4" cy="663.3" r="3.3" fill="#8f8ef0"/>
<text x="896.9" y="668.2" font-family="Liberation Sans" font-size="10" fill="#bbb">外部链接</text>
<!--/CHART-->
  </svg>
  <!-- dropdown -->
  <div class="a" style="left:17px;top:145px;width:118px;height:22px;border:1px solid #dcdcdc;border-radius:2px"></div>
  <div class="a" style="left:113px;top:146px;width:1px;height:20px;background:#e0e0e0"></div>
  <div class="t" style="left:26px;top:148px;font-size:10px;color:#777">指标<span style="margin-left:1px">:</span></div>
  <div class="t" style="left:61px;top:148px;font-size:10px;color:#333">浏览量<span style="letter-spacing:-0.6px">(PV)</span></div>
  <svg class="a" style="left:120px;top:153px" width="10" height="6" viewBox="0 0 10 6"><path d="M1.2 1 L5 4.6 L8.8 1" stroke="#a8a8a8" stroke-width="1.8" fill="none"/></svg>

  <div class="a" style="left:0;top:439px;width:1077px;height:1px;background:#e8e8e8"></div>
  <div class="a" style="left:517px;top:440px;width:43px;height:21px;background:#f8f8f8;border:1px solid #e6e6e6;border-top:none"></div>
  <svg class="a" style="left:533px;top:445px" width="11" height="10" viewBox="0 0 11 10"><path d="M1.5 5 L5.5 1.5 L9.5 5 M1.5 9 L5.5 5.5 L9.5 9" stroke="#aaa" stroke-width="1.2" fill="none"/></svg>
  <div class="a" style="left:17px;top:462px;width:95px;height:40px;border:1px solid #d8d8d8;border-radius:2px;background:#fff"></div>
  <svg class="a" style="left:31px;top:470px" width="14" height="12" viewBox="0 0 14 12"><path d="M0.5 7 H3 L4.5 4 L6.5 11 L8.5 1 L10 7 H13.5" stroke="#3a7bd5" stroke-width="1.4" fill="none"/></svg>
  <div class="t" style="left:48px;top:468px;font-size:10px;color:#3a7bd5">自定义指标</div>
</div>

<!-- right float widget -->
<div class="a" style="left:1226px;top:622px;width:31px;height:91px;background:#3e9cf4;border-radius:3px;box-shadow:0 0 1px rgba(0,0,0,0.1)"></div>
<svg class="a" style="left:1226px;top:622px" width="31" height="91" viewBox="0 0 31 91">
  <path d="M21.08 17.36 A5.6 5.6 0 1 0 16.09 21.78" stroke="#fff" stroke-width="1.7" fill="none"/>
  <circle cx="13.6" cy="16" r="0.9" fill="#fff"/><circle cx="17.6" cy="16" r="0.9" fill="#fff"/>
  <circle cx="15.6" cy="46.8" r="6.2" fill="#fff"/><path d="M13 50 L18.5 44.2" stroke="#3e9cf4" stroke-width="1.5"/><path d="M14 50.3 H19" stroke="#3e9cf4" stroke-width="0.9"/>
  <ellipse cx="14" cy="75.3" rx="5" ry="4.2" fill="#fff"/><ellipse cx="18.2" cy="78.6" rx="4.2" ry="3.5" fill="#fff" stroke="#3e9cf4" stroke-width="0.9"/>
  <circle cx="12.3" cy="74.5" r="0.7" fill="#3e9cf4"/><circle cx="15.6" cy="74.5" r="0.7" fill="#3e9cf4"/>
</svg>
<div class="a" style="left:1256px;top:42px;width:1px;height:687px;background:#e2e2e2"></div><div class="a" style="left:1257px;top:0;width:2px;height:729px;background:#fcfdfd;z-index:6"></div>
</body></html>
